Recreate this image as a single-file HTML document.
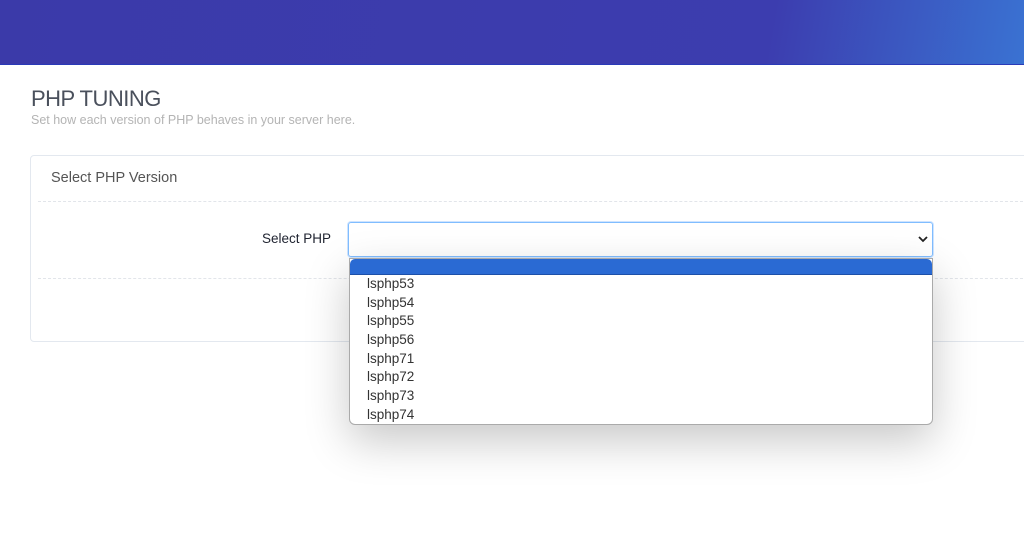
<!DOCTYPE html>
<html><head><style>
body{margin:0;width:1024px;height:558px;overflow:hidden;background:#fff;font-family:"Liberation Sans",sans-serif;position:relative}
.hdr{position:absolute;left:0;top:0;width:1024px;height:64px;background:linear-gradient(100deg,#3b3aa9 0%,#3c3daf 75%,#3a72d2 100%);border-bottom:1px solid #2a3ab8}
.t{position:absolute;left:31px;top:86px;font-size:22px;color:#4a505c;letter-spacing:-0.5px;font-weight:300}
.s{position:absolute;left:31px;top:113px;font-size:12.5px;color:#b4b4b4}
.card{position:absolute;left:30px;top:155px;width:1000px;height:185px;border:1px solid #e3e8ef;border-radius:4px}
.ct{position:absolute;left:51px;top:170px;font-size:14.5px;color:#555}
.d1,.d2{position:absolute;left:38px;width:990px;border-top:1px dashed #e2e5ea}
.d1{top:201px}.d2{top:278px}
.lbl{position:absolute;left:262px;top:231px;font-size:13.5px;color:#1f2330}
.sel{position:absolute;left:348px;top:222px;width:583px;height:33px;border:1px solid #80bdff;border-radius:3px;box-shadow:0 0 0 1px #cfe4ff}
.chev{position:absolute;left:918px;top:235px}
.dd{position:absolute;left:349px;top:258px;width:582px;height:165px;background:#fff;border:1px solid #aaa;border-radius:0 0 6px 6px;box-shadow:0 16px 44px rgba(0,0,0,.22)}
.hl{height:15px;background:#2a6ad3;border-radius:5px 5px 0 0;border-bottom:1px solid #1c4fa8}
.it{font-size:13.5px;color:#333;padding-left:17px;height:18.7px;line-height:18.7px}
</style></head><body>
<div class="hdr"></div>
<div class="t">PHP TUNING</div>
<div class="s">Set how each version of PHP behaves in your server here.</div>
<div class="card"></div>
<div class="ct">Select PHP Version</div>
<div class="d1"></div><div class="d2"></div>
<div class="lbl">Select PHP</div>
<div class="sel"></div>
<svg class="chev" width="10" height="8" viewBox="0 0 10 8"><path d="M1 2l4 4 4-4" stroke="#222" stroke-width="1.8" fill="none"/></svg>
<div class="dd"><div class="hl"></div>
<div class="it">lsphp53</div><div class="it">lsphp54</div><div class="it">lsphp55</div><div class="it">lsphp56</div><div class="it">lsphp71</div><div class="it">lsphp72</div><div class="it">lsphp73</div><div class="it">lsphp74</div>
</div>
</body></html>
